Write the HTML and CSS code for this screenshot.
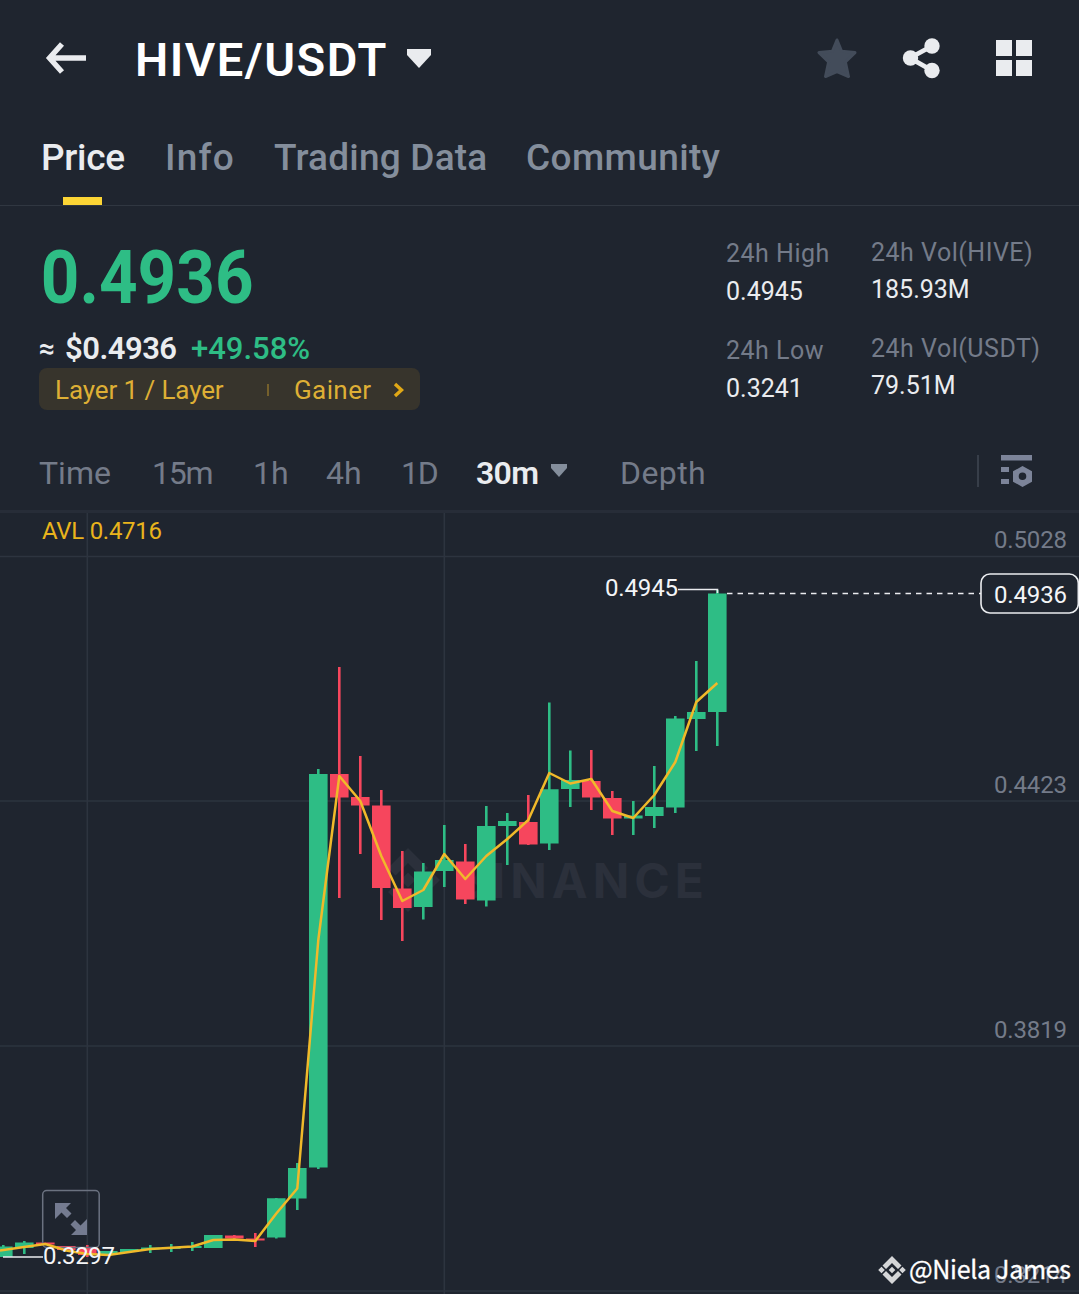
FILE: index.html
```html
<!DOCTYPE html>
<html lang="en">
<head>
<meta charset="utf-8">
<title>HIVE/USDT</title>
<link rel="stylesheet" href="styles.css">
</head>
<body>
<main class="app">
  <header class="topbar">
    <svg class="back" width="42" height="34" viewBox="0 0 42 34"><path d="M17 3 4.500 17l12.500 14M4.500 17h36.500" fill="none" stroke="#eaecef" stroke-width="5.400"/></svg>
    <h1 class="pair">HIVE/USDT</h1>
    <svg class="pair-caret" width="24" height="19" viewBox="0 0 24 19"><path d="M0 0h24v6L12 19 0 6z" fill="#eaecef"/></svg>
    <div class="actions">
      <svg width="40" height="42" viewBox="0 0 40 42"><path d="M20 3l4.600 11.300 13.400 1.300-9.600 9.400 3.100 14.500L20 34.600 8.500 39.500l3.100-14.500L2 15.600l13.400-1.300z" fill="#434c5a" stroke="#434c5a" stroke-width="3" stroke-linejoin="round"/></svg>
      <svg width="40" height="42" viewBox="0 0 40 42"><path d="M31 9 9 21l22 12.500" fill="none" stroke="#eaecef" stroke-width="4.800"/><g fill="#eaecef"><circle cx="31" cy="9" r="7.700"/><circle cx="9.500" cy="21" r="7.700"/><circle cx="31" cy="33.500" r="7.700"/></g></svg>
      <svg width="36" height="36" viewBox="0 0 36 36"><path d="M0 0h16v16H0zM20 0h16v16H20zM0 20h16v16H0zM20 20h16v16H20z" fill="#eaecef"/></svg>
    </div>
  </header>

  <nav class="tabs">
    <a class="tab active"><span class="t-price">Price</span></a>
    <a class="tab"><span class="t-info">Info</span></a>
    <a class="tab"><span class="t-data">Trading Data</span></a>
    <a class="tab"><span class="t-comm">Community</span></a>
  </nav>

  <section class="summary">
    <div class="quote">
      <div class="price">0.4936</div>
      <div class="change"><span class="approx">≈</span><span class="usd">$0.4936</span><span class="pct">+49.58%</span></div>
      <div class="tags">
        <span class="tag-layer">Layer 1 / Layer</span><i class="tag-sep"></i><span class="tag-gain">Gainer</span>
        <svg width="12" height="16" viewBox="0 0 12 16"><path d="M2 2l6.500 6L2 14" fill="none" stroke="#e0a816" stroke-width="3.400"/></svg>
      </div>
    </div>
    <dl class="stats">
      <div><dt>24h High</dt><dd>0.4945</dd></div>
      <div><dt>24h Low</dt><dd>0.3241</dd></div>
    </dl>
    <dl class="stats volumes">
      <div><dt>24h Vol(HIVE)</dt><dd>185.93M</dd></div>
      <div><dt>24h Vol(USDT)</dt><dd>79.51M</dd></div>
    </dl>
  </section>

  <nav class="intervals">
    <span>Time</span><span class="tight">15m</span><span>1h</span><span>4h</span><span class="tight">1D</span><b>30m</b>
    <svg class="int-caret" width="16" height="13" viewBox="0 0 16 13"><path d="M0 0h16v4L8 13 0 4z" fill="#848e9c"/></svg>
    <span class="depth">Depth</span>
    <i class="int-sep"></i>
    <svg class="settings" width="32" height="32" viewBox="0 0 32 32"><path d="M0 0h31v5.500H0zM0 12h8v5H0zM0 24h8v5H0z" fill="#7c8499"/><path fill-rule="evenodd" d="M21.500 11l9.500 5.300v10.400L21.500 32l-9.500-5.300V16.300zM21.500 17.500a3.800 3.800 0 1 0 0 7.600 3.800 3.800 0 0 0 0-7.600z" fill="#7c8499"/></svg>
  </nav>

  <svg class="chart" width="1079" height="781" viewBox="0 513 1079 781">
    <path class="grid" d="M0 556.500H1079M0 801H1079M0 1046H1079M0 1291H1079M87.300 513V1294M444.300 513V1294"/>
    <g class="brand">
      <path d="M408 848l20 20-7.500 7.500L408 863l-12.500 12.500L388 868zM408 912l20-20-7.500-7.500L408 897l-12.500-12.500L388 892zM408 872.500l7.500 7.500-7.500 7.500-7.500-7.500zM383.500 872.500l7.500 7.500-7.500 7.500-7.500-7.500zM432.500 872.500l7.500 7.500-7.500 7.500-7.500-7.500z"/>
      <text x="455" y="898" textLength="249">BINANCE</text>
    </g>
    <g class="axis">
      <text x="994" y="548" textLength="73">0.5028</text>
      <text x="994" y="793" textLength="73">0.4423</text>
      <text x="994" y="1038" textLength="73">0.3819</text>
      <text x="994" y="1283" textLength="73">0.3214</text>
    </g>
    <text class="avl" x="42" y="539" textLength="120">AVL 0.4716</text>

    <path class="wick up" d="M3.300 1245V1257M24.300 1241V1254M150.300 1245V1253M171.300 1244V1252M192.300 1242V1251M276.300 1198V1238.500M297.300 1163V1210M318.300 769V1169M423.300 863V919.500M444.300 825V887M486.300 806V906.500M507.300 813V865M549.300 702.500V850M570.300 750.500V807M633.300 801V835M654.300 766V828M675.300 716V813M696.300 661V751M717.300 590V746"/>
    <path class="wick down" d="M87.300 1245V1257M234.300 1235V1241M255.300 1233V1247M339.300 667V898M360.300 756V854M381.300 790V920M402.300 851V941M465.300 844V904M528.300 795V845M591.300 750V810M612.300 791V835"/>
    <path class="body up" d="M3.300 1246.500V1257M24.300 1242.500V1248M108.300 1251V1255M129.300 1249V1252M150.300 1247.500V1249.500M171.300 1247V1249M192.300 1246V1248M213.300 1235V1248M276.300 1198.300V1237.500M297.300 1168V1198.500M318.300 774V1167.500M423.300 871.500V907M444.300 860V871M486.300 826V900.500M507.300 821V826M549.300 789.300V843.500M570.300 780V789M633.300 815.500V818.500M654.300 807V816M675.300 718.500V807.500M696.300 712V719M717.300 593.500V712"/>
    <path class="body down" d="M45.300 1242.500V1244.500M66.300 1246V1250M87.300 1247V1255M234.300 1235.500V1238.500M255.300 1238.500V1240.500M339.300 774V797.500M360.300 797V805.500M381.300 805.500V888M402.300 888.500V908M465.300 861.500V899.500M528.300 822V844.500M591.300 781V797.500M612.300 798V818.500"/>

    <rect class="expand-box" x="42.700" y="1190.500" width="56.500" height="57" rx="4"/>
    <path class="expand" d="M55 1203h16l-5 5 5.500 5.500-4.500 4.500-5.500-5.500-6.500 6.500zM87 1235H71l5-5-5.500-5.500 4.500-4.500 5.500 5.500 6.500-6.500z"/>

    <path class="avg" d="M0 1250.500 24 1247 45.300 1244 66.300 1250.500 87.300 1254 108.300 1255 150.300 1249 192.300 1246.500 213.300 1240 234.300 1239.500 255.300 1241 276.300 1213.500 297.300 1188.500 318.300 940 339.300 776 360.300 801 381.300 856 402.300 901 423.300 890 444.300 854 465.300 879 486.300 856 507.300 839 528.300 820 549.300 773 570.300 783.500 591.300 779 612.300 811 633.300 818 654.300 795 675.300 762 696.300 702 717.300 683"/>

    <path class="marker" d="M678 589.500H717.500V593M3 1257H43"/>
    <path class="marker dash" d="M727 593.500H981"/>
    <rect class="marker" x="981" y="574" width="97.300" height="39" rx="9"/>
    <g class="mark-text">
      <text x="605" y="596" textLength="73">0.4945</text>
      <text x="994" y="603" textLength="73">0.4936</text>
      <text x="43" y="1264" textLength="72">0.3297</text>
    </g>
    <g class="author">
      <path d="M892 1256l9.500 9.500-3.500 3.500-6-6-6 6-3.500-3.500zM892 1284l9.500-9.500-3.500-3.500-6 6-6-6-3.500 3.500zM892 1266.700l3.300 3.300-3.300 3.300-3.300-3.300zM881.500 1266.700l3.300 3.300-3.300 3.300-3.300-3.300zM902.500 1266.700l3.300 3.300-3.300 3.300-3.300-3.300z" fill="#d5d6d8"/>
      <text x="909" y="1279" textLength="162">@Niela James</text>
    </g>
  </svg>
</main>
</body>
</html>
```
FILE: styles.css
```css
* { box-sizing: border-box; }
body { margin: 0; background: #1f252f; color: #eaecef; font-family: Roboto, "Liberation Sans", sans-serif; }
.app { width: 1079px; height: 1294px; overflow: hidden; display: flex; flex-direction: column; }
svg { display: block; flex: none; }
span, b, dt, dd, h1 { white-space: nowrap; }

.topbar { height: 118px; padding: 0 47px 2px 45px; display: flex; align-items: center; }
.pair { margin: 3px 0 0 48px; width: 252px; font-size: 47px; line-height: 56px; font-weight: 600; color: #fff; letter-spacing: 1.5px; }
.pair-caret { margin-left: 20px; }
.actions { margin-left: auto; display: flex; align-items: center; gap: 55px; }
.actions svg:first-child { margin-right: -11px; }

.tabs { height: 88px; border-bottom: 1px solid #303741; padding-left: 41px; display: grid; grid-template-columns: 124px 109px 252px 240px; }
.tab { font-size: 37px; line-height: 44px; padding-top: 18px; font-weight: 500; color: #848e9c; display: flex; flex-direction: column; }
.tab.active { color: #eaecef; }
.t-price { letter-spacing: -.3px; }
.t-info { letter-spacing: 1.2px; }
.t-data { letter-spacing: .2px; }
.t-comm { letter-spacing: .4px; }
.tab.active::after { content: ""; width: 39px; height: 8px; margin: 17px 0 0 22px; background: #fcd535; }

.summary { height: 231px; padding: 1px 0 0 39px; display: grid; grid-template-columns: 687px 145px 208px; }
.price { font-size: 74px; line-height: 80px; font-weight: 700; color: #2ebd85; margin-top: 31px; padding-left: 2px; transform: scaleX(.91); transform-origin: left; }
.change { display: flex; font-size: 31px; line-height: 38px; font-weight: 600; margin-top: 12px; }
.approx { width: 26px; font-size: 28px; }
.usd { width: 126px; letter-spacing: -.5px; }
.pct { color: #2ebd85; font-weight: 500; }
.tags { width: 381px; height: 42px; border-radius: 8px; background: #37342c; color: #deaf35; display: flex; align-items: center; padding: 2px 0 0 16px; font-size: 26px; }
.tag-layer { width: 212px; letter-spacing: -.1px; }
.tag-sep { width: 2px; height: 12px; background: #75602c; margin-right: 25px; }
.tag-gain { width: 99px; letter-spacing: .4px; }

.stats { margin: 0; padding-top: 31px; display: flex; flex-direction: column; gap: 24px; }
.stats.volumes { padding-top: 30px; gap: 24px; }
.stats.volumes dd { margin-top: 2px; }
.stats dt { font-size: 25px; line-height: 32px; color: #747b89; letter-spacing: .5px; }
.stats dd { margin: 3px 0 0; font-size: 25px; line-height: 38px; }

.intervals { height: 76px; padding-bottom: 2px; border-bottom: 3px solid #272d38; padding-left: 39px; display: grid; grid-template-columns: 113px 101px 73px 75px 75px 75px 69px 357px 24px 40px; align-items: center; font-size: 32px; color: #747b89; }
.intervals b { color: #eaecef; font-weight: 600; letter-spacing: -.7px; }
.tight { letter-spacing: -1.2px; }
.depth { letter-spacing: .4px; }
.int-caret { margin-top: -5px; }
.int-sep { width: 2px; height: 32px; background: #373e49; margin-top: -4px; }
.settings { margin-top: -4px; }

.grid { stroke: #2d343f; stroke-width: 1.6; fill: none; }
.brand { fill: #2b303b; }
.brand text { font: 700 48px Inter, sans-serif; }
.axis text { font-size: 24px; fill: #747b89; }
.avl { font-size: 24px; fill: #e9b41c; }
.wick { stroke-width: 2.6; fill: none; }
.body { stroke-width: 18.6; fill: none; }
.up { stroke: #2ebd85; }
.down { stroke: #f6465d; }
.avg { stroke: #f0b92a; stroke-width: 2.5; fill: none; stroke-linejoin: round; }
.expand-box { fill: none; stroke: #6b7280; stroke-width: 1.5; }
.expand { fill: #747b90; }
.marker { stroke: #eaecef; stroke-width: 1.6; fill: none; }
.dash { stroke-dasharray: 5.5 5; }
.mark-text text { font-size: 24px; fill: #f4f5f7; }
.author text { font: 400 25px "Noto Sans CJK SC", sans-serif; fill: #fff; stroke: #fff; stroke-width: .3px; }
```
